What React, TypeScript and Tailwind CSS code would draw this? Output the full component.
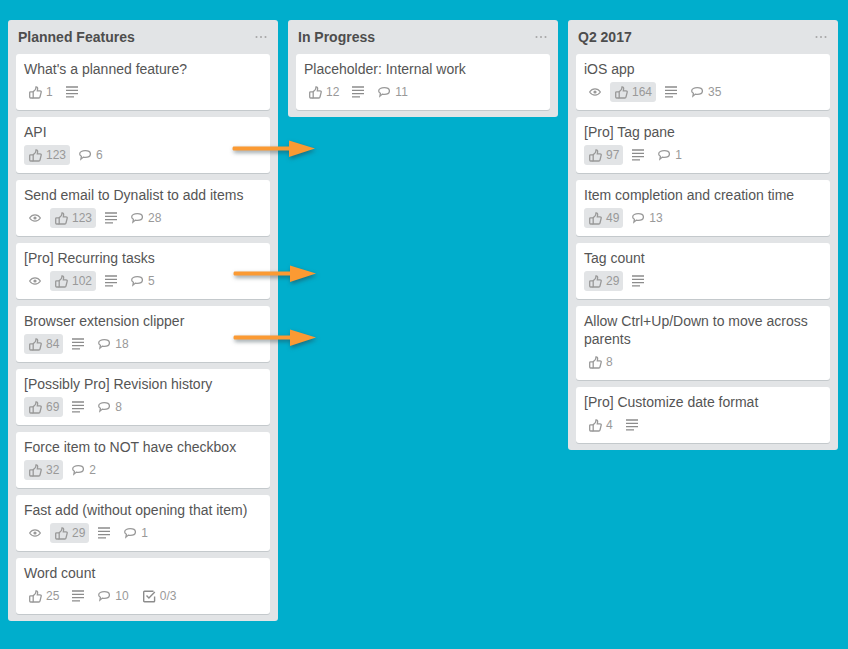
import React from "react";

type Card = {
  title: string;
  eye?: boolean;
  votes?: number;
  voted?: boolean;
  desc?: boolean;
  comments?: number;
  checklist?: string;
};

const planned: Card[] = [
  { title: "What's a planned feature?", votes: 1, desc: true },
  { title: "API", votes: 123, voted: true, comments: 6 },
  { title: "Send email to Dynalist to add items", eye: true, votes: 123, voted: true, desc: true, comments: 28 },
  { title: "[Pro] Recurring tasks", eye: true, votes: 102, voted: true, desc: true, comments: 5 },
  { title: "Browser extension clipper", votes: 84, voted: true, desc: true, comments: 18 },
  { title: "[Possibly Pro] Revision history", votes: 69, voted: true, desc: true, comments: 8 },
  { title: "Force item to NOT have checkbox", votes: 32, voted: true, comments: 2 },
  { title: "Fast add (without opening that item)", eye: true, votes: 29, voted: true, desc: true, comments: 1 },
  { title: "Word count", votes: 25, desc: true, comments: 10, checklist: "0/3" },
];

const inProgress: Card[] = [
  { title: "Placeholder: Internal work", votes: 12, desc: true, comments: 11 },
];

const q2: Card[] = [
  { title: "iOS app", eye: true, votes: 164, voted: true, desc: true, comments: 35 },
  { title: "[Pro] Tag pane", votes: 97, voted: true, desc: true, comments: 1 },
  { title: "Item completion and creation time", votes: 49, voted: true, comments: 13 },
  { title: "Tag count", votes: 29, voted: true, desc: true },
  { title: "Allow Ctrl+Up/Down to move across parents", votes: 8 },
  { title: "[Pro] Customize date format", votes: 4, desc: true },
];

function ThumbIcon() {
  return (
    <svg width="13" height="13" viewBox="0 0 13 13" fill="none" stroke="#999999" strokeWidth="1.3" className="shrink-0">
      <path d="M4.2 5.8 L6.3 3.6 C6.8 3 6.9 2.2 7 0.9 C8.1 0.7 8.8 1.9 8.6 3 L8.3 4.9 L11 4.9 C11.9 4.9 12.4 5.5 12.2 6.2 L11 11 C10.9 11.6 10.4 12 9.8 12 L4.2 12 Z" />
      <path d="M4.2 5.8 L1.6 5.8 C1 5.8 0.7 6.1 0.7 6.7 L0.7 11.1 C0.7 11.7 1 12 1.6 12 L4.2 12" />
    </svg>
  );
}

function DescIcon() {
  return (
    <svg width="12" height="12" viewBox="0 0 12 12" fill="none" stroke="#8c8c8c" strokeWidth="1.3" className="shrink-0">
      <path d="M0 1 H12 M0 4.3 H12 M0 7.6 H12 M0 10.9 H8" />
    </svg>
  );
}

function CommentIcon() {
  return (
    <svg width="12" height="12" viewBox="0 0 12 12" fill="none" stroke="#999999" strokeWidth="1.3" className="shrink-0">
      <path d="M6.3 1.6 C9.2 1.6 11.4 3 11.4 5 C11.4 7 9.2 8.3 6.3 8.3 C5.6 8.3 5 8.2 4.4 8.1 L1.9 10.2 L2.4 7.3 C1.3 6.7 0.7 5.9 0.7 5 C0.7 3 3.3 1.6 6.3 1.6 Z" />
    </svg>
  );
}

function EyeIcon() {
  return (
    <svg width="12" height="12" viewBox="0 0 12 12" fill="none" stroke="#999999" strokeWidth="1.2" className="shrink-0">
      <path d="M0.6 6 C2 3.9 3.9 2.9 6 2.9 C8.1 2.9 10 3.9 11.4 6 C10 8.1 8.1 9.1 6 9.1 C3.9 9.1 2 8.1 0.6 6 Z" />
      <circle cx="6" cy="6" r="1.6" fill="#999999" stroke="none" />
    </svg>
  );
}

function CheckIcon() {
  return (
    <svg width="13" height="13" viewBox="0 0 13 13" fill="none" stroke="#8c8c8c" strokeWidth="1.4" className="shrink-0">
      <path d="M11.6 6.5 V11 C11.6 11.5 11.3 11.8 10.8 11.8 H1.5 C1 11.8 0.7 11.5 0.7 11 V2 C0.7 1.5 1 1.2 1.5 1.2 H10.5" />
      <path d="M3.5 5.6 L5.9 8 L11.8 2.1" />
    </svg>
  );
}

function Badge({ icon, label }: { icon: React.ReactNode; label?: string | number }) {
  return (
    <div className="flex h-5 items-center gap-[5px] px-[5px]">
      {icon}
      {label !== undefined && <span className="text-xs leading-5 text-[#999999]">{label}</span>}
    </div>
  );
}

function VoteBadge({ votes, active }: { votes: number; active?: boolean }) {
  return (
    <div className={"flex h-5 items-center gap-1 rounded-[3px] pr-1 pl-[5px] " + (active ? "bg-[#e2e4e6]" : "")}>
      <ThumbIcon />
      <span className="text-xs leading-5 text-[#999999]">{votes}</span>
    </div>
  );
}

function ChecklistBadge({ label }: { label: string }) {
  return (
    <div className="flex h-5 items-center gap-1 px-[5px]">
      <CheckIcon />
      <span className="text-xs leading-5 text-[#999999]">{label}</span>
    </div>
  );
}

function CardItem({ card }: { card: Card }) {
  return (
    <div className="rounded-[3px] bg-white px-2 pt-1.5 pb-2 shadow-[0_1px_0_#c4c9cc]">
      <div className="mb-1 text-sm leading-[18px] text-[#555555]">{card.title}</div>
      <div className="flex gap-1">
        {card.eye && <Badge icon={<EyeIcon />} />}
        {card.votes !== undefined && <VoteBadge votes={card.votes} active={card.voted} />}
        {card.desc && <Badge icon={<DescIcon />} />}
        {card.comments !== undefined && <Badge icon={<CommentIcon />} label={card.comments} />}
        {card.checklist && <ChecklistBadge label={card.checklist} />}
      </div>
    </div>
  );
}

function List({ title, cards }: { title: string; cards: Card[] }) {
  return (
    <div className="w-[270px] shrink-0 rounded-[3px] bg-[#e2e4e6] px-2 pb-[7px]">
      <div className="flex h-[34px] items-center justify-between pr-[3px] pl-0.5">
        <h2 className="text-sm font-bold text-[#4d4d4d]">{title}</h2>
        <svg width="12" height="4" viewBox="0 0 12 4" fill="#a6a6a6">
          <circle cx="1.5" cy="2" r="1" />
          <circle cx="6" cy="2" r="1" />
          <circle cx="10.5" cy="2" r="1" />
        </svg>
      </div>
      <div className="flex flex-col gap-[7px]">
        {cards.map((card) => (
          <CardItem key={card.title} card={card} />
        ))}
      </div>
    </div>
  );
}

function Arrow({ className }: { className: string }) {
  return (
    <svg
      width="90"
      height="26"
      viewBox="0 0 90 26"
      className={"absolute drop-shadow-[1px_2px_2px_rgba(40,60,70,0.55)] " + className}
    >
      <path d="M1.5 6.5 H57 V0.5 L83 8.5 L57 17 V10.5 H1.5 C0.2 10.5 0.2 6.5 1.5 6.5 Z" fill="#fb9a33" />
    </svg>
  );
}

export default function App() {
  return (
    <div
      className="relative flex h-[649px] items-start gap-2.5 overflow-hidden bg-[#00aecc] pt-5 pl-2"
      style={{ fontFamily: '"Liberation Sans", Arial, sans-serif' }}
    >
      <List title="Planned Features" cards={planned} />
      <List title="In Progress" cards={inProgress} />
      <List title="Q2 2017" cards={q2} />
      <Arrow className="top-[140px] left-[232px]" />
      <Arrow className="top-[265px] left-[233px]" />
      <Arrow className="top-[329px] left-[233px]" />
    </div>
  );
}
